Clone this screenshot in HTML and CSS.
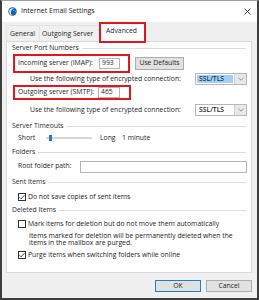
FILE: index.html
```html
<!DOCTYPE html>
<html>
<head>
<meta charset="utf-8">
<title>Internet Email Settings</title>
<link rel="stylesheet" href="styles.css">
</head>
<body>
<div class="window">
  <div class="titlebar">
    <svg class="app-icon" viewBox="0 0 10 10" width="9" height="9">
      <circle cx="5" cy="5" r="4.7" fill="#1d5fa8"/>
      <path d="M1.3 4.2 C2 2 4.5 0.9 6.8 1.8 C5 2.2 3.6 3.4 3.2 5.6 C3 7 3.6 8.3 4.6 9.3 C2.6 9 1 7.2 1.3 4.2 Z" fill="#d9eefa"/>
      <path d="M5.6 4 C6.8 3.6 8.2 4.2 8.8 5.6" stroke="#5cc2e8" stroke-width="0.9" fill="none"/>
    </svg>
    <span class="title">Internet Email Settings</span>
    <svg class="close" viewBox="0 0 7 7" width="7" height="7">
      <path d="M0.5 0.5 L6.5 6.5 M6.5 0.5 L0.5 6.5" stroke="#2b2b2b" stroke-width="0.9"/>
    </svg>
  </div>

  <div class="tabs">
    <div class="tab tab-general">General</div>
    <div class="tab tab-outgoing">Outgoing Server</div>
    <div class="tab tab-advanced">Advanced</div>
  </div>

  <div class="panel">
    <div class="group h12"><span>Server Port Numbers</span></div>

    <div class="row h19">
      <div class="mark mark-in">
        <span class="lbl">Incoming server (IMAP):</span>
        <span class="input port">993</span>
      </div>
      <div class="btn btn-defaults">Use Defaults</div>
    </div>

    <div class="row h12">
      <span class="enc-lbl">Use the following type of encrypted connection:</span>
      <div class="combo">
        <span class="val selected">SSL/TLS</span>
        <span class="arrow"><svg viewBox="0 0 6 4" width="6" height="4"><path d="M0.5 0.8 L3 3.2 L5.5 0.8" stroke="#7a7a7a" stroke-width="0.8" fill="none"/></svg></span>
      </div>
    </div>

    <div class="row h14">
      <div class="mark mark-out">
        <span class="lbl">Outgoing server (SMTP):</span>
        <span class="input port">465</span>
      </div>
    </div>

    <div class="row h22">
      <span class="enc-lbl">Use the following type of encrypted connection:</span>
      <div class="combo">
        <span class="val">SSL/TLS</span>
        <span class="arrow"><svg viewBox="0 0 6 4" width="6" height="4"><path d="M0.5 0.8 L3 3.2 L5.5 0.8" stroke="#7a7a7a" stroke-width="0.8" fill="none"/></svg></span>
      </div>
    </div>

    <div class="group h10"><span>Server Timeouts</span></div>

    <div class="row h14">
      <span class="short">Short</span>
      <div class="track"><span class="thumb"></span></div>
      <span class="long">Long</span>
      <span>1 minute</span>
    </div>

    <div class="group h14"><span>Folders</span></div>

    <div class="row h15">
      <span class="root-lbl">Root folder path:</span>
      <span class="input root"></span>
    </div>

    <div class="group h17"><span>Sent Items</span></div>

    <div class="row h12">
      <span class="check checked"><svg viewBox="0 0 8 8" width="8" height="8"><path d="M1.4 4.1 L3.2 5.9 L6.6 2" stroke="#3a3a3a" stroke-width="0.9" fill="none"/></svg></span>
      <span class="cb-lbl">Do not save copies of sent items</span>
    </div>

    <div class="group h15"><span>Deleted Items</span></div>

    <div class="row h12">
      <span class="check"></span>
      <span class="cb-lbl">Mark items for deletion but do not move them automatically</span>
    </div>

    <div class="note h18">Items marked for deletion will be permanently deleted when the<br>items in the mailbox are purged.</div>

    <div class="row h14">
      <span class="check checked"><svg viewBox="0 0 8 8" width="8" height="8"><path d="M1.4 4.1 L3.2 5.9 L6.6 2" stroke="#3a3a3a" stroke-width="0.9" fill="none"/></svg></span>
      <span class="cb-lbl">Purge items when switching folders while online</span>
    </div>
  </div>

  <div class="footer">
    <div class="btn btn-ok">OK</div>
    <div class="btn btn-cancel">Cancel</div>
  </div>
</div>
</body>
</html>
```

FILE: styles.css
```css
* { box-sizing: border-box; }

html, body {
  margin: 0;
  padding: 0;
}

body {
  width: 259px;
  height: 300px;
  overflow: hidden;
  background: #f0f0f0;
  font-family: "Open Sans", "Noto Sans", sans-serif;
  font-size: 6.8px;
  color: #1e1e1e;
  line-height: 1.2;
}

.window {
  width: 259px;
  height: 300px;
  border: 2px solid #3e3e3e;
  border-top: 1px solid #a0a0a0;
  background: #f0f0f0;
  display: flex;
  flex-direction: column;
}

/* Title bar */
.titlebar {
  height: 21px;
  flex: none;
  background: #fff;
  display: flex;
  align-items: center;
  padding: 0 6px 0 6px;
}
.app-icon { flex: none; }
.title {
  margin-left: 4px;
  font-size: 7px;
  color: #1a1a1a;
}
.close { margin-left: auto; flex: none; }

/* Tabs */
.tabs {
  height: 19px;
  flex: none;
  display: flex;
  align-items: flex-end;
  padding-left: 4px;
}
.tab {
  height: 16px;
  display: flex;
  align-items: center;
  padding-top: 1px;
  border: 1px solid #e2e2e2;
  border-bottom: none;
  background: #f0f0f0;
  white-space: nowrap;
  overflow: hidden;
}
.tab-general { width: 34px; padding-left: 3px; }
.tab-outgoing { width: 61px; padding-left: 2px; border-left: none; }
.tab-advanced {
  width: 47px;
  height: 21px;
  margin-left: -2px;
  margin-bottom: -2px;
  padding-left: 5px;
  padding-top: 0;
  padding-bottom: 2px;
  background: #fff;
  border: 2px solid #e3161f;
  position: relative;
  z-index: 1;
}

/* Panel */
.panel {
  height: 232px;
  flex: none;
  margin: 0 5px 0 4px;
  background: #fff;
  border: 1px solid #d9d9d9;
  padding: 0 5px;
}

.h10 { height: 10px; }
.h12 { height: 12px; }
.h14 { height: 14px; }
.h15 { height: 15px; }
.h17 { height: 17px; }
.h18 { height: 18px; }
.h19 { height: 19px; }
.h22 { height: 22px; }

.group {
  display: flex;
  align-items: center;
  color: #2a2a2a;
}
.group::after {
  content: "";
  flex: 1;
  height: 1px;
  background: #dcdcdc;
  margin-left: 3px;
}

.row {
  display: flex;
  align-items: center;
  white-space: nowrap;
}

/* Red annotation boxes */
.mark {
  display: flex;
  align-items: center;
  border: 2px solid #e3161f;
  margin-left: 1px;
  padding-left: 3px;
}
.mark .lbl { flex: 1; }
.mark-in { width: 117px; height: 19px; padding-right: 8px; }
.mark-out { width: 118px; height: 15px; padding-right: 9px; }

.input {
  display: flex;
  align-items: center;
  height: 12px;
  border: 1px solid #b4b4b4;
  background: #fff;
  padding-left: 2px;
}
.port { width: 21px; height: 11px; }
.mark-out .port { width: 22px; }

.btn {
  display: flex;
  align-items: center;
  justify-content: center;
  height: 13px;
  background: #e1e1e1;
  border: 1px solid #adadad;
  color: #1e1e1e;
}
.btn-defaults { width: 49px; margin-left: 5px; }

.enc-lbl { margin-left: 18px; }

.combo {
  display: flex;
  width: 52px;
  height: 12px;
  margin-left: auto;
  margin-right: -1px;
  border: 1px solid #b8b8b8;
  background: #fff;
}
.combo .val {
  flex: 1;
  display: flex;
  align-items: center;
  padding-left: 2px;
  margin: 1px;
  font-weight: 600;
}
.combo .val.selected {
  background: #9fd1f4;
  color: #12355f;
}
.combo .arrow {
  width: 12px;
  display: flex;
  align-items: center;
  justify-content: center;
  background: #e8e8e8;
  border-left: 1px solid #d0d0d0;
}

/* Slider */
.short { width: 28px; margin-left: 6px; }
.track {
  width: 46px;
  height: 2px;
  background: #d8d8d8;
  display: flex;
  align-items: center;
}
.thumb {
  width: 3px;
  height: 6px;
  margin-left: 3px;
  background: #1b7fd6;
}
.long { width: 22px; margin-left: 8px; }

/* Root folder */
.root-lbl { width: 62px; margin-left: 6px; }
.root { flex: 1; margin-right: -1px; }

/* Checkboxes */
.check {
  width: 8px;
  height: 8px;
  flex: none;
  margin-left: 6px;
  border: 1px solid #333;
  background: #fff;
  display: flex;
}
.check svg { margin: -1px; }
.cb-lbl { margin-left: 2px; }

.note {
  margin-left: 17px;
  line-height: 7.5px;
  padding-top: 1.5px;
  color: #222;
  white-space: nowrap;
}

/* Footer */
.footer {
  display: flex;
  justify-content: flex-end;
  gap: 5px;
  padding: 7px 5px 0 0;
}
.btn-ok { width: 46px; height: 12px; border-color: #1b7fd6; }
.btn-cancel { width: 46px; height: 12px; }
```
